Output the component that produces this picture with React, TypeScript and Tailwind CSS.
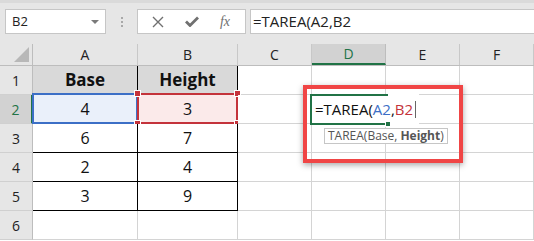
import React from "react";

const cols = [
  { key: "A", w: "w-[105px]" },
  { key: "B", w: "w-[100px]" },
  { key: "C", w: "w-[74px]" },
  { key: "D", w: "w-[74px]" },
  { key: "E", w: "w-[74px]" },
  { key: "F", w: "w-[74px]" },
];

const data: [string, string][] = [
  ["Base", "Height"],
  ["4", "3"],
  ["6", "7"],
  ["2", "4"],
  ["3", "9"],
];

function Corner({ pos }: { pos: string }) {
  return <span className={`absolute w-[7px] h-[7px] bg-[#c4333b] border border-white ${pos}`} />;
}

function Toolbar() {
  return (
    <div className="h-[44px] bg-[#e6e6e6] border-t-[3px] border-[#dadada] flex items-start pt-[6px] pl-[5px]">
      <div className="w-[101px] h-[25px] bg-white border border-[#c6c6c6] flex items-center justify-between pl-[6px] pr-[6px] text-[13px] text-[#222]">
        <span>B2</span>
        <span className="w-0 h-0 border-l-[4px] border-r-[4px] border-t-[4px] border-l-transparent border-r-transparent border-t-[#7a7a7a]" />
      </div>
      <div className="w-[31px] h-[25px] flex flex-col items-center justify-center gap-[2px]">
        <span className="w-[2px] h-[2px] bg-[#a8a8a8]" />
        <span className="w-[2px] h-[2px] bg-[#a8a8a8]" />
        <span className="w-[2px] h-[2px] bg-[#a8a8a8]" />
      </div>
      <div className="w-[109px] h-[25px] bg-white border border-[#c6c6c6] flex items-center text-[#707070]">
        <div className="w-[40px] flex justify-center">
          <svg width="12" height="12" viewBox="0 0 12 12">
            <path d="M1 1 L11 11 M11 1 L1 11" stroke="#707070" strokeWidth="1.4" />
          </svg>
        </div>
        <div className="w-[28px] flex justify-center">
          <svg width="14" height="11" viewBox="0 0 14 11">
            <path d="M1 5.5 L5 9.5 L13 1.5" stroke="#707070" strokeWidth="2.8" fill="none" />
          </svg>
        </div>
        <div className="w-[38px] flex justify-center font-['Liberation_Serif',serif] italic text-[14px] leading-none">
          fx
        </div>
      </div>
      <div className="ml-[4px] flex-1 h-[25px] bg-white border-y border-l border-[#c6c6c6] flex items-center pl-[2px] text-[15px] text-[#222]">
        =TAREA(A2,B2
      </div>
    </div>
  );
}

function HeaderRow() {
  return (
    <div className="flex h-[22px] bg-[#e6e6e6] border-b border-[#bdbdbd]">
      <div className="w-[33px] h-full border-r border-[#bdbdbd] relative">
        <svg className="absolute right-[3px] bottom-[3px]" width="15" height="15" viewBox="0 0 15 15">
          <polygon points="15,0 15,15 0,15" fill="#b8b8b8" />
        </svg>
      </div>
      {cols.map((c) => (
        <div
          key={c.key}
          className={`${c.w} h-full flex items-center justify-center text-[14px] ${
            c.key === "D"
              ? "bg-[#d2d2d2] text-[#217346] border-b-2 border-[#217346] border-r border-r-[#bdbdbd]"
              : "text-[#222] border-r border-[#c8c8c8]"
          }`}
        >
          {c.key}
        </div>
      ))}
    </div>
  );
}

function Row({ n }: { n: number }) {
  const d = data[n - 1];
  return (
    <div className="flex h-[29px]">
      <div
        className={`w-[33px] h-full flex items-center justify-center text-[14px] border-b border-[#d0d0d0] ${
          n === 2
            ? "bg-[#d2d2d2] text-[#217346] border-r-2 border-r-[#217346]"
            : "bg-[#e6e6e6] text-[#222] border-r border-r-[#bdbdbd]"
        }`}
      >
        {n}
      </div>
      {cols.map((c, i) => {
        const inTable = d && i < 2;
        const text = inTable ? d[i] : "";
        let bg = "bg-white";
        if (n === 1 && inTable) bg = "bg-[#d9d9d9]";
        if (n === 2 && i === 0) bg = "bg-[#eaf0fa]";
        if (n === 2 && i === 1) bg = "bg-[#fbeaea]";
        const border = inTable
          ? "border-r border-b border-black"
          : "border-r border-b border-[#d4d4d4]";
        return (
          <div
            key={c.key}
            className={`${c.w} h-full relative flex items-center justify-center text-[16px] text-[#111] ${bg} ${border} ${
              n === 1 && inTable ? "font-bold text-[17px]" : ""
            }`}
          >
            {text}
            {n === 2 && i === 0 && (
              <span className="absolute -left-[1px] -top-[2px] -right-[1px] -bottom-[1px] border-2 border-[#3c6fc6]" />
            )}
            {n === 2 && i === 1 && (
              <span className="absolute -left-[1px] -top-[2px] -right-[1px] -bottom-[1px] border-2 border-[#c4333b]">
                <Corner pos="-left-[5px] -top-[5px]" />
                <Corner pos="-right-[5px] -top-[5px]" />
                <Corner pos="-left-[5px] -bottom-[5px]" />
                <Corner pos="-right-[5px] -bottom-[5px]" />
              </span>
            )}
          </div>
        );
      })}
    </div>
  );
}

export default function App() {
  return (
    <div className="w-[534px] h-[241px] overflow-hidden bg-white relative font-['Open_Sans',sans-serif]">
      <Toolbar />
      <HeaderRow />
      {[1, 2, 3, 4, 5, 6].map((n) => (
        <Row key={n} n={n} />
      ))}

      {/* cell in edit mode */}
      <div className="absolute left-[311px] top-[94px] w-[108px] h-[30px] bg-white" />
      <div className="absolute left-[310px] top-[94px] w-[78px] h-[31px] border-t-2 border-l-2 border-b-2 border-[#217346]">
        <span className="absolute -right-[3px] -bottom-[4px] w-[6px] h-[6px] bg-[#217346] border border-white" />
      </div>
      <div className="absolute left-[315px] top-[94px] h-[31px] flex items-center text-[15px] text-[#111]">
        <span>=TAREA(</span>
        <span className="text-[#3c6fc6]">A2</span>
        <span>,</span>
        <span className="text-[#c4333b]">B2</span>
        <span className="ml-[2px] w-px h-[17px] bg-[#666]" />
      </div>
      <div className="absolute left-[324px] top-[128px] h-[16px] px-[3px] bg-white border border-[#c6c6c6] flex items-center text-[12px] text-[#555] leading-none">
        TAREA(Base, <span className="font-bold ml-[3px]">Height</span>)
      </div>

      {/* annotation */}
      <div className="absolute left-[303px] top-[85px] w-[160px] h-[78px] border-4 border-[#f04545] shadow-[0_2px_6px_rgba(0,0,0,0.35)]" />
    </div>
  );
}
